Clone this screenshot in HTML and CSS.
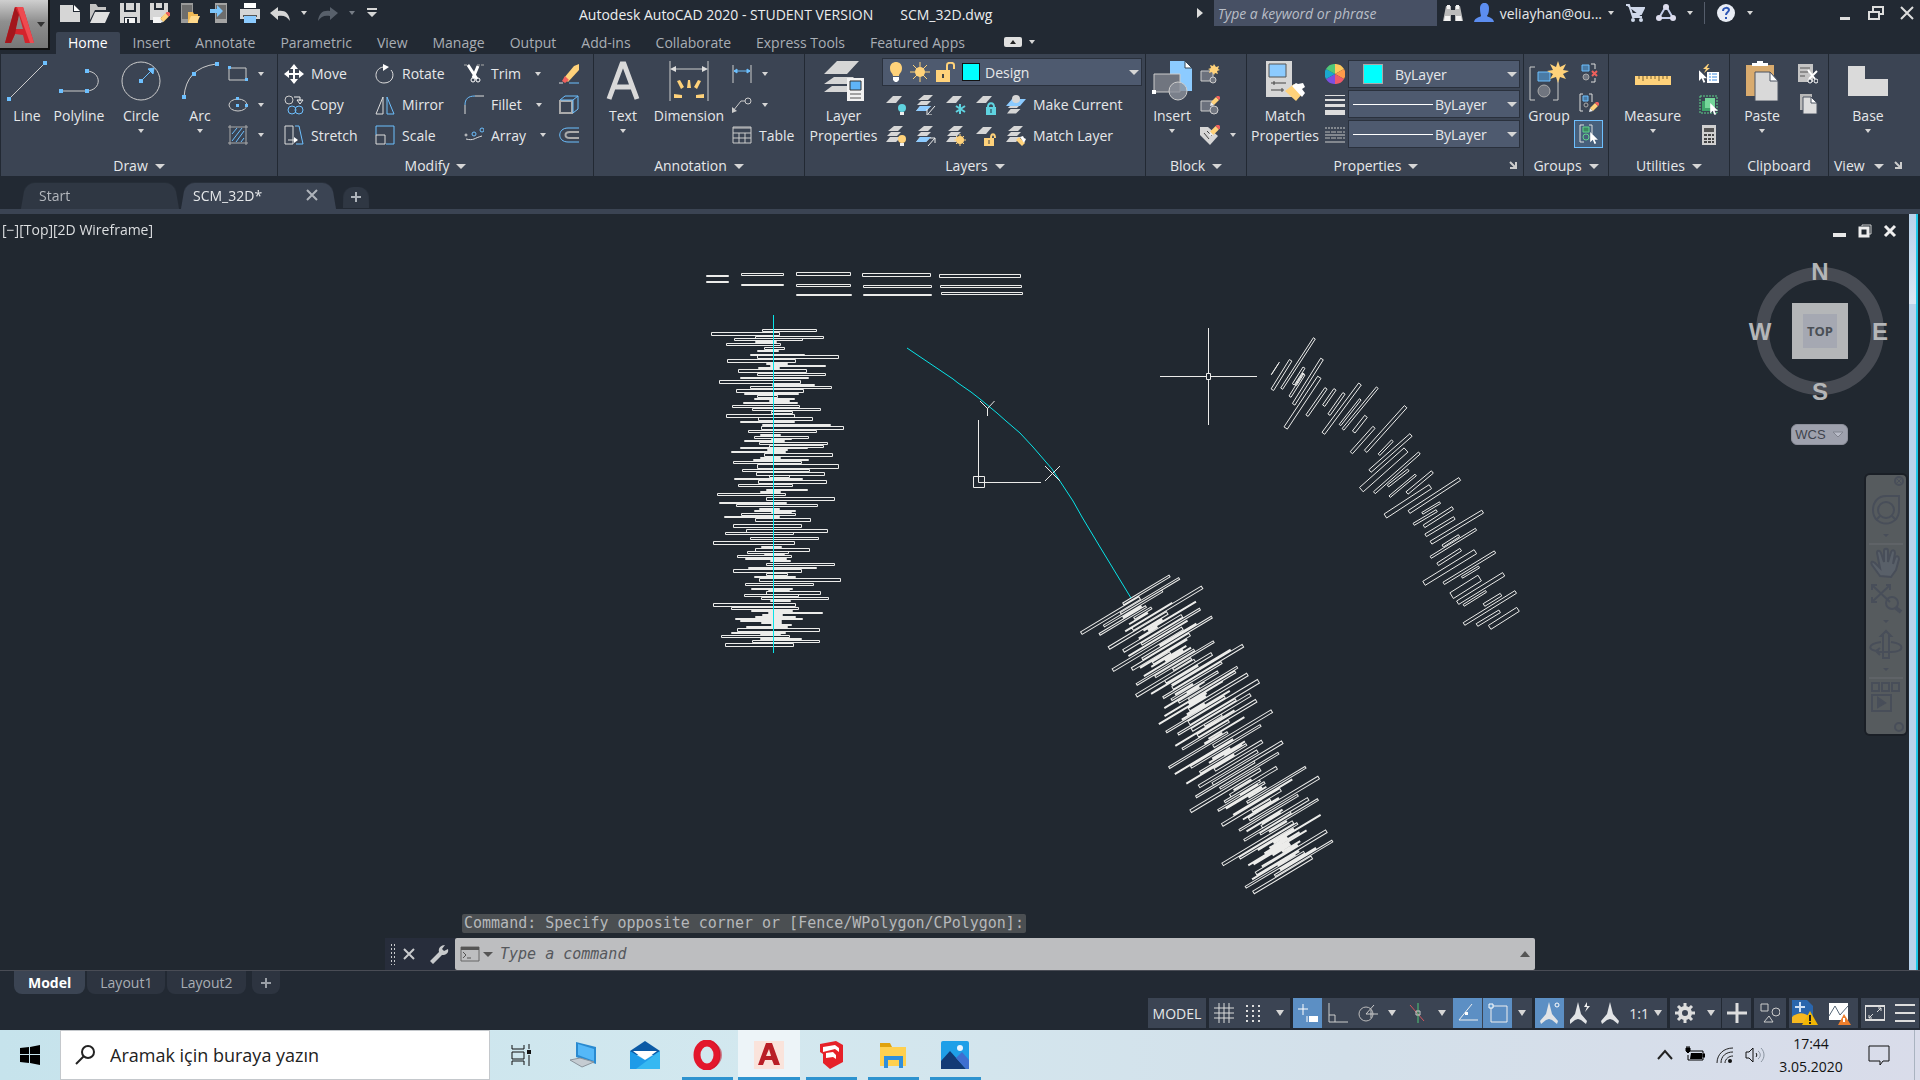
FILE: index.html
```html
<!DOCTYPE html>
<html lang="en">
<head>
  <meta charset="UTF-8">
  <meta name="viewport" content="width=device-width, initial-scale=1.0">
  <title>Autodesk AutoCAD 2020 - SCM_32D.dwg</title>
  <link rel="stylesheet" href="styles.css">
</head>
<body>

<svg class="sprite" aria-hidden="true">
  <symbol id="sheet" viewBox="0 0 20 20"><path d="M7 1h9l-6 7H0z" fill="#d6d6d6"/></symbol>
  <symbol id="stack" viewBox="0 0 20 20"><path d="M8 0h9l-5 5H2zM5 6h10l-4 4H1zM4 11h11l-5 5H0z" fill="#d6d6d6"/></symbol>
  <symbol id="pencil" viewBox="0 0 10 10"><path d="M0 10l1-4 3 3z" fill="#eee"/><path d="M1 6l5-5 3 3-5 5z" fill="#ffd27a"/><path d="M6 1l1-1h2l1 1v2L9 4z" fill="#f0605c"/></symbol>
  <symbol id="cursor" viewBox="0 0 10 14"><path d="M0 0v12l3-3 2 5 2-1-2-4h4z" fill="#fff"/></symbol>
  <symbol id="launch" viewBox="0 0 10 10"><path d="M2 2l6 6M8 2v6H2" fill="none" stroke="#ccc" stroke-width="2"/></symbol>
  <symbol id="person" viewBox="0 0 20 24"><path d="M10 1l2 8 1 4 6 7-1 3-5-4-3-1-3 1-5 4-1-3 6-7 1-4z" fill="#e2e4e6"/></symbol>
</svg>

<div class="app">

  <header class="titlebar">
    <button class="app-logo" aria-label="Application menu">
      <svg width="32" height="40" viewBox="0 0 32 40"><path d="M2 39L12 3h8l11 36h-9l-2-8-8-1-4 9z" fill="#d3242c"/><path d="M12 3l4 8-4 19-4 9H2z" fill="#a3171d"/><path d="M16 11l4 14h-7z" fill="#8a8a8a"/><path d="M20 3l11 36h-4L14 3z" fill="#ee4a50"/></svg>
      <i class="caret dark"></i>
    </button>
    <div class="quick">
      <button aria-label="New"><svg width="20" height="20" viewBox="0 0 20 20"><path d="M0 2h13v7h7v10H0z" fill="#d6d6d6"/><path d="M14 2l6 6h-6z" fill="#fff"/></svg></button>
      <button aria-label="Open"><svg width="20" height="20" viewBox="0 0 20 20"><path d="M0 1h6l2 3h8v3H5L0 17z" fill="#c4c4c4"/><path d="M5 9h15l-5 11H0z" fill="#e0e0e0"/></svg></button>
      <button aria-label="Save"><svg width="20" height="20" viewBox="0 0 20 20"><path d="M0 0h4v9h12V0h4v20h-3v-6H4v6H0zM6 0h8v7H6z" fill="#d6d6d6"/><path d="M5 15h10v5H5z" fill="#f4f4f4"/><path d="M7 16h2v4H7z" fill="#222933"/></svg></button>
      <button aria-label="Save as"><svg width="20" height="20" viewBox="0 0 20 20"><path d="M0 0h4v7h10V0h4v9l-6 5H4v3H0zM6 0h6v5H6z" fill="#d6d6d6"/><path d="M3 14h8v6H3z" fill="#f4f4f4"/><use href="#pencil" x="9" y="9" width="11" height="11"/></svg></button>
      <button aria-label="Open from mobile"><svg width="20" height="20" viewBox="0 0 20 20"><path d="M1 0h12v20H1z" fill="#9a9a9a"/><path d="M2 2h10v14H2z" fill="#6d6d6d"/><path d="M8 9h5l1 2h4v9H8z" fill="#f0b955"/><path d="M11 13h9l-3 7H8z" fill="#ffd98c"/></svg></button>
      <button aria-label="Save to mobile"><svg width="20" height="20" viewBox="0 0 20 20"><path d="M5 0h12v20H5z" fill="#a4a4a4"/><path d="M6 2h10v14H6z" fill="#6d6d6d"/><path d="M0 6h7V2l6 6-6 6v-4H0z" fill="#7cc4fa"/></svg></button>
      <button aria-label="Plot"><svg width="20" height="20" viewBox="0 0 20 20"><path d="M4 0h12v5H4z" fill="#fff"/><path d="M0 6h20v10H0z" fill="#d6d6d6"/><path d="M3 12h14v2H3z" fill="#555"/><path d="M4 13h12v7H4z" fill="#8ccbff"/></svg></button>
      <button aria-label="Undo"><svg width="20" height="20" viewBox="0 0 20 20"><path d="M8 4v4c7-1 11 2 12 10-3-5-7-6-12-5v4L0 10z" fill="#d6d6d6"/></svg></button>
      <i class="caret"></i>
      <button aria-label="Redo"><svg width="20" height="20" viewBox="0 0 20 20"><path d="M12 4v4C5 7 1 10 0 18c3-5 7-6 12-5v4l8-7z" fill="#58606b"/></svg></button>
      <i class="caret dim"></i>
      <button aria-label="Customize"><svg width="12" height="12" viewBox="0 0 12 12"><path d="M1 1h10v2H1zM1 5h10l-5 5z" fill="#d6d6d6"/></svg></button>
    </div>
    <div class="doc-title"><span>Autodesk AutoCAD 2020 - STUDENT VERSION</span><span>SCM_32D.dwg</span></div>
    <div class="info">
      <svg width="6" height="10" viewBox="0 0 6 10"><path d="M0 0l6 5-6 5z" fill="#ddd"/></svg>
      <input type="text" aria-label="Search" placeholder="Type a keyword or phrase">
      <button aria-label="Find"><svg width="20" height="20" viewBox="0 0 20 20"><path d="M3 3h5v4h4V3h5l3 15h-8v-6H8v6H0z" fill="#bbb"/><path d="M2 13h5v5H1zM13 13h5l1 5h-6zM4 2h3v4H4zM13 2h3v4h-3z" fill="#f2f2f2"/></svg></button>
      <button class="user"><svg width="20" height="20" viewBox="0 0 20 20"><path d="M6 5c0-7 9-7 9 0s-2 7-2 8 6 1 7 6H0c1-5 7-5 7-6S6 10 6 5z" fill="#5c8df0"/></svg>veliayhan@ou...<i class="caret"></i></button>
      <button aria-label="App store"><svg width="20" height="20" viewBox="0 0 20 20"><path d="M1 2h3l4 12h9M5 5h14l-3 6H7" fill="#cfd8ea" stroke="#cfd8ea" stroke-width="2"/><circle cx="8" cy="17" r="2" fill="#cfd8ea"/><circle cx="16" cy="17" r="2" fill="#cfd8ea"/></svg></button>
      <button aria-label="Stay connected"><svg width="20" height="20" viewBox="0 0 20 20"><path d="M10 3L3 15h14z" fill="none" stroke="#c3cdea" stroke-width="2"/><circle cx="10" cy="4" r="3" fill="#dde"/><circle cx="3" cy="15" r="3" fill="#dde"/><circle cx="17" cy="15" r="3" fill="#dde"/></svg></button>
      <i class="caret"></i>
      <span class="divider"></span>
      <button aria-label="Help"><svg width="20" height="20" viewBox="0 0 20 20"><circle cx="10" cy="10" r="9" fill="#e9edf5"/><path d="M7 8c0-4 6-4 6-1 0 2-3 2-3 5M10 14v2" fill="none" stroke="#2c55b4" stroke-width="2"/></svg></button>
      <i class="caret"></i>
    </div>
    <div class="win-buttons">
      <button aria-label="Minimize"><svg width="16" height="16" viewBox="0 0 16 16"><path d="M3 12h10v3H3z" fill="#ddd"/></svg></button>
      <button aria-label="Restore"><svg width="16" height="16" viewBox="0 0 16 16"><path d="M1 7h10v7H1zM5 7V2h10v7h-4" fill="none" stroke="#ddd" stroke-width="2"/></svg></button>
      <button aria-label="Close"><svg width="16" height="16" viewBox="0 0 16 16"><path d="M2 2l12 12M14 2L2 14" stroke="#ddd" stroke-width="2"/></svg></button>
    </div>
  </header>

  <nav class="ribbon-tabs">
    <button class="active">Home</button>
    <button>Insert</button>
    <button>Annotate</button>
    <button>Parametric</button>
    <button>View</button>
    <button>Manage</button>
    <button>Output</button>
    <button>Add-ins</button>
    <button>Collaborate</button>
    <button>Express Tools</button>
    <button>Featured Apps</button>
    <button class="ribbon-min" aria-label="Minimize ribbon"><svg width="18" height="10" viewBox="0 0 18 10"><rect width="18" height="10" rx="2" fill="#e0e0e0"/><path d="M6 7l3-4 3 4z" fill="#222"/></svg><i class="caret"></i></button>
  </nav>

  <section class="ribbon">

    <div class="panel">
      <div class="tools draw">
        <button class="big"><svg width="40" height="40" viewBox="0 0 40 40"><path d="M2 38L38 2" stroke="#ccc"/><path d="M0 36h4v4H0zM36 0h4v4h-4z" fill="#6dc0ff"/></svg>Line</button>
        <button class="big"><svg width="40" height="40" viewBox="0 0 40 40"><path d="M2 30h26c15-1 15-19 0-20" fill="none" stroke="#ccc"/><path d="M0 28h4v4H0zM26 28h4v4h-4zM26 8h4v4h-4z" fill="#6dc0ff"/></svg>Polyline</button>
        <button class="big"><svg width="40" height="40" viewBox="0 0 40 40"><circle cx="20" cy="20" r="19" fill="none" stroke="#ccc"/><path d="M20 20L32 8M27 8l6-1-1 6z" stroke="#6dc0ff" fill="#6dc0ff"/><path d="M18 18h4v4h-4z" fill="#6dc0ff"/></svg>Circle<i class="caret"></i></button>
        <button class="big"><svg width="40" height="40" viewBox="0 0 40 40"><path d="M4 36Q6 7 36 3" fill="none" stroke="#ccc"/><path d="M2 34h4v4H2zM12 11h4v4h-4zM35 1h4v4h-4z" fill="#6dc0ff"/></svg>Arc<i class="caret"></i></button>
        <div class="rows">
          <button class="small" aria-label="Rectangle"><svg width="20" height="20" viewBox="0 0 20 20"><path d="M1 4h17v12H1z" fill="none" stroke="#ccc"/><path d="M0 2h3v3H0zM17 14h3v3h-3z" fill="#6dc0ff"/></svg><i class="caret"></i></button>
          <button class="small" aria-label="Ellipse"><svg width="20" height="20" viewBox="0 0 20 20"><ellipse cx="10" cy="10" rx="9" ry="6" fill="none" stroke="#ccc"/><path d="M8 2h3v3H8zM8 9h3v3H8zM17 9h3v3h-3z" fill="#6dc0ff"/></svg><i class="caret"></i></button>
          <button class="small" aria-label="Hatch"><svg width="20" height="20" viewBox="0 0 20 20"><path d="M0 2h20M0 18h20M2 0v20M18 0v20" stroke="#aaa"/><path d="M4 9l5-6M4 16L14 3M8 17l8-11M13 17l3-4" stroke="#6dc0ff"/></svg><i class="caret"></i></button>
        </div>
      </div>
      <button class="panel-title">Draw<i class="caret wide"></i></button>
    </div>

    <div class="panel">
      <div class="tools modify">
        <div class="rows">
          <button class="small"><svg width="20" height="20" viewBox="0 0 20 20"><path d="M10 2v16M2 10h16" stroke="#fff" stroke-width="2"/><path d="M10 0l4 5H6zM10 20l4-5H6zM0 10l5-4v8zM20 10l-5-4v8z" fill="#fff"/></svg>Move</button>
          <button class="small"><svg width="20" height="20" viewBox="0 0 20 20"><circle cx="5" cy="5" r="4" fill="none" stroke="#ccc"/><path d="M10 2h6v4M13 5h6l-3 4z" fill="none" stroke="#eee"/><g fill="none" stroke="#6dc0ff"><circle cx="8" cy="15" r="4"/><circle cx="15" cy="15" r="4"/></g></svg>Copy</button>
          <button class="small"><svg width="20" height="20" viewBox="0 0 20 20"><path d="M1 1h8v18H1zM4 15h8" fill="none" stroke="#ddd"/><path d="M10 12l4 3-4 3z" fill="#fff"/><path d="M11 1h4l4 18h-7" fill="none" stroke="#6dc0ff"/></svg>Stretch</button>
        </div>
        <div class="rows">
          <button class="small"><svg width="20" height="20" viewBox="0 0 20 20"><path d="M8 3C-2 5-1 19 9 19c9 0 11-9 7-13" fill="none" stroke="#ddd" stroke-width="1"/><path d="M8 0l6 3-6 4z" fill="#fff"/></svg>Rotate</button>
          <button class="small"><svg width="20" height="20" viewBox="0 0 20 20"><path d="M8 2v17H1z" fill="none" stroke="#ddd"/><path d="M12 2v17h7z" fill="none" stroke="#6dc0ff"/></svg>Mirror</button>
          <button class="small"><svg width="20" height="20" viewBox="0 0 20 20"><path d="M1 10V1h18v18h-8" fill="none" stroke="#6dc0ff"/><path d="M1 10h9v9H1z" fill="none" stroke="#ddd"/></svg>Scale</button>
        </div>
        <div class="rows">
          <button class="small"><svg width="20" height="20" viewBox="0 0 20 20"><path d="M0 1h5M13 1h7" stroke="#aaa" stroke-dasharray="3 1"/><path d="M4 1l9 14M14 2L9 14" stroke="#fff" stroke-width="3"/><g fill="none" stroke="#fff" stroke-width="1"><circle cx="9" cy="16" r="2"/><circle cx="14" cy="16" r="2"/></g></svg>Trim<i class="caret far"></i></button>
          <button class="small"><svg width="20" height="20" viewBox="0 0 20 20"><path d="M1 10C1 4 4 1 11 1" fill="none" stroke="#6dc0ff"/><path d="M1 10v9M11 1h9" stroke="#ddd"/></svg>Fillet<i class="caret far"></i></button>
          <button class="small"><svg width="20" height="20" viewBox="0 0 20 20"><path d="M2 14c8 2 8-1 16-3" fill="none" stroke="#ddd"/><circle cx="2" cy="10" r="1" fill="none" stroke="#ddd"/><circle cx="10" cy="9" r="2" fill="none" stroke="#6dc0ff"/><circle cx="18" cy="5" r="2" fill="none" stroke="#6dc0ff"/></svg>Array<i class="caret far"></i></button>
        </div>
        <div class="rows">
          <button class="small" aria-label="Erase"><svg width="20" height="20" viewBox="0 0 20 20"><path d="M0 19h4" stroke="#ddd"/><path d="M10 19h10" stroke="#6dc0ff"/><path d="M5 14L15 2l5-2v6L9 18z" fill="#ffd27a"/><path d="M3 17l3-5 4 4-4 3z" fill="#f0605c"/></svg></button>
          <button class="small" aria-label="Explode"><svg width="20" height="20" viewBox="0 0 20 20"><path d="M1 6h12v12H1z" fill="none" stroke="#aaa" stroke-width="2"/><path d="M1 5l5-4h13v13l-5 4M19 1l-5 4v13M2 5h12" fill="none" stroke="#6dc0ff"/></svg></button>
          <button class="small" aria-label="Offset"><svg width="20" height="20" viewBox="0 0 20 20"><path d="M20 3H9c-11 0-11 14 0 14h11" fill="none" stroke="#6dc0ff"/><path d="M20 7h-9c-6 0-6 6 0 6h9" fill="none" stroke="#aaa" stroke-width="2"/></svg></button>
        </div>
      </div>
      <button class="panel-title">Modify<i class="caret wide"></i></button>
    </div>

    <div class="panel">
      <div class="tools annotation">
        <button class="big"><svg width="40" height="40" viewBox="0 0 40 40"><path d="M6 38L19 3h2l13 35M11 26h18" fill="none" stroke="#d9d9d9" stroke-width="5"/></svg>Text<i class="caret"></i></button>
        <button class="big"><svg width="40" height="40" viewBox="0 0 40 40"><path d="M1 0v40M39 0v40M3 8h34" stroke="#ccc"/><path d="M1 8l6-3v6zM39 8l-6-3v6z" fill="#ddd"/><path d="M18 27l1-8h2l1 8zM12 28l-4-8 3-1 4 7zM28 28l4-8-3-1-4 7zM5 33l8 1v3H5zM35 33l-8 1v3h8z" fill="#ffd27a"/></svg>Dimension</button>
        <div class="rows">
          <button class="small" aria-label="Linear"><svg width="20" height="20" viewBox="0 0 20 20"><path d="M1 1v18M19 1v18" stroke="#ccc"/><path d="M2 7h16M5 5L2 7l3 2zM15 5l3 2-3 2z" stroke="#6dc0ff" fill="#6dc0ff"/></svg><i class="caret"></i></button>
          <button class="small" aria-label="Leader"><svg width="20" height="20" viewBox="0 0 20 20"><path d="M1 16L9 6h4" stroke="#ccc" fill="none"/><circle cx="16" cy="6" r="3" stroke="#ccc" fill="none"/><path d="M0 18v-6l5 4z" fill="#ccc"/></svg><i class="caret"></i></button>
          <button class="small"><svg width="20" height="20" viewBox="0 0 20 20"><path d="M1 2h18v16H1z" fill="none" stroke="#ccc"/><path d="M1 3h18M1 8h18M1 13h18M7 8v10M13 8v10" stroke="#ccc"/></svg>Table</button>
        </div>
      </div>
      <button class="panel-title">Annotation<i class="caret wide"></i></button>
    </div>

    <div class="panel">
      <div class="tools layers">
        <button class="big"><svg width="40" height="40" viewBox="0 0 40 40"><path d="M13 0h22L23 13H0zM10 16h20l-7 7H0zM8 25h16v6H0z" fill="#d6d6d6"/><path d="M23 17h17v23H23z" fill="#f2f2f2"/><path d="M26 20h11v9H26z" fill="#5fb4f8" stroke="#333"/><path d="M26 33h11M26 37h11" stroke="#555"/></svg>Layer<br>Properties</button>
        <div class="layer-rows">
          <div class="combo layer-combo">
            <span class="layer-state">
              <svg width="16" height="22" viewBox="0 0 16 22"><path d="M2 7c0-8 12-8 12 0 0 5-3 5-3 8H5c0-3-3-3-3-8z" fill="#ffd27a"/><path d="M5 16h6v3l-2 2H7l-2-2z" fill="#fff"/></svg>
              <svg width="20" height="20" viewBox="0 0 20 20"><circle cx="10" cy="10" r="5" fill="#ffd27a"/><path d="M10 0v20M0 10h20M3 3l14 14M17 3L3 17" stroke="#ffd27a"/></svg>
              <svg width="20" height="20" viewBox="0 0 20 20"><path d="M0 8h14v12H0z" fill="#ffd27a"/><path d="M11 9V3c0-3 7-3 7 0v4" fill="none" stroke="#ffd27a" stroke-width="2"/><path d="M7 12v4" stroke="#444" stroke-width="2"/></svg>
              <i class="swatch"></i>
            </span>
            <select aria-label="Layer"><option>Design</option></select>
            <i class="caret wide"></i>
          </div>
          <div class="icon-row">
            <button class="small" aria-label="Layer off"><svg width="20" height="20" viewBox="0 0 20 20"><use href="#sheet" width="20" height="20"/><circle cx="16" cy="13" r="4" fill="#5fd3e0"/><path d="M14 17h4v3h-4z" fill="#eee"/></svg></button>
            <button class="small" aria-label="Layer isolate"><svg width="20" height="20" viewBox="0 0 20 20"><use href="#stack" width="20" height="20"/><path d="M4 11h11l-5 5H0z" fill="#8ccbff"/><path d="M19 11l-7 8M11 14v6h5" stroke="#eee" fill="none"/></svg></button>
            <button class="small" aria-label="Layer freeze"><svg width="20" height="20" viewBox="0 0 20 20"><use href="#sheet" width="20" height="20"/><path d="M14 9v10M10 11l9 6M19 11l-9 6" stroke="#5fd3e0" stroke-width="2"/></svg></button>
            <button class="small" aria-label="Layer lock"><svg width="20" height="20" viewBox="0 0 20 20"><use href="#sheet" width="20" height="20"/><path d="M10 12h10v8H10z" fill="#5fd3e0"/><path d="M12 12c0-5 6-5 6 0" fill="none" stroke="#5fd3e0" stroke-width="2"/><path d="M15 14v4" stroke="#234"/></svg></button>
            <button class="small"><svg width="20" height="20" viewBox="0 0 20 20"><use href="#stack" y="4" width="20" height="18"/><path d="M6 4h14l-6 7H0z" fill="#8ccbff"/><circle cx="10" cy="4" r="4" fill="#d6d6d6"/></svg>Make Current</button>
          </div>
          <div class="icon-row">
            <button class="small" aria-label="Turn all layers on"><svg width="20" height="20" viewBox="0 0 20 20"><use href="#stack" width="20" height="20"/><circle cx="16" cy="13" r="4" fill="#ffd27a"/><path d="M14 17h4v3h-4z" fill="#eee"/></svg></button>
            <button class="small" aria-label="Layer unisolate"><svg width="20" height="20" viewBox="0 0 20 20"><use href="#stack" width="20" height="20"/><path d="M4 11h11l-5 5H0z" fill="#8ccbff"/><path d="M12 20l7-8M14 12h5v5" stroke="#eee" fill="none"/></svg></button>
            <button class="small" aria-label="Thaw all layers"><svg width="20" height="20" viewBox="0 0 20 20"><use href="#stack" width="20" height="20"/><circle cx="14" cy="14" r="4" fill="#ffd27a"/><path d="M14 8v12M8 14h12M10 10l8 8M18 10l-8 8" stroke="#ffd27a"/></svg></button>
            <button class="small" aria-label="Layer unlock"><svg width="20" height="20" viewBox="0 0 20 20"><use href="#sheet" width="20" height="20"/><path d="M8 12h10v8H8z" fill="#ffd27a"/><path d="M15 12c0-5 4-5 4 0" fill="none" stroke="#ffd27a" stroke-width="2"/><path d="M13 14v4" stroke="#444"/></svg></button>
            <button class="small"><svg width="20" height="20" viewBox="0 0 20 20"><use href="#stack" width="20" height="20"/><path d="M10 14l3-3 6 6-3 3z" fill="#ffd27a"/><path d="M14 11l3-1 1 2 2 1-2 4z" fill="#fff"/></svg>Match Layer</button>
          </div>
        </div>
      </div>
      <button class="panel-title">Layers<i class="caret wide"></i></button>
    </div>

    <div class="panel">
      <div class="tools block">
        <button class="big"><svg width="40" height="40" viewBox="0 0 40 40"><path d="M18 0h15l7 7v23H18z" fill="#8ccbff"/><path d="M33 0v7h7z" fill="#fff" stroke="#345"/><path d="M2 13h26v18H2z" fill="#70757f" stroke="#ccc"/><path d="M0 29h4v4H0z" fill="#fff"/><circle cx="26" cy="30" r="9" fill="#8b909a" fill-opacity=".8" stroke="#ccc"/></svg>Insert<i class="caret"></i></button>
        <div class="rows">
          <button class="small" aria-label="Create block"><svg width="20" height="20" viewBox="0 0 20 20"><path d="M1 7h12v10H1z" fill="#6b717d" stroke="#ccc"/><circle cx="13" cy="16" r="3" fill="#70757f" stroke="#ccc"/><path d="M14 0l2 3 3-1-1 3 2 1-3 1 1 3-3-1-1 2-2-3-3 1 1-3-2-1 3-1-1-3 3 1z" fill="#ffd27a"/></svg></button>
          <button class="small" aria-label="Edit block"><svg width="20" height="20" viewBox="0 0 20 20"><path d="M1 6h12v10H1z" fill="#6b717d" stroke="#ccc"/><circle cx="14" cy="15" r="4" fill="#70757f" stroke="#ccc"/><use href="#pencil" x="10" y="1" width="10" height="10"/></svg></button>
          <button class="small" aria-label="Edit attributes"><svg width="20" height="20" viewBox="0 0 20 20"><path d="M0 2h8l10 9-8 9L0 10z" fill="#d6d6d6"/><path d="M4 8l5 6M7 6l5 5" stroke="#444"/><use href="#pencil" x="9" y="0" width="11" height="11"/></svg><i class="caret"></i></button>
        </div>
      </div>
      <button class="panel-title">Block<i class="caret wide"></i></button>
    </div>

    <div class="panel">
      <div class="tools properties">
        <button class="big"><svg width="40" height="40" viewBox="0 0 40 40"><path d="M1 0h26v36H1z" fill="#d6d6d6"/><path d="M4 3h17v13H4z" fill="#8ccbff" stroke="#555"/><path d="M6 22h15M6 29h13M9 20v4M17 27v4" stroke="#444"/><path d="M20 30l9-7 8 10-6 7z" fill="#ffd27a"/><path d="M27 25l4-3 2 1 5-1 2 4-3 2 3 4-3 4z" fill="#fff"/></svg>Match<br>Properties</button>
        <div class="rows">
          <span class="small"><svg width="20" height="20" viewBox="0 0 20 20"><path d="M10 10V0a10 10 0 0 1 9 5z" fill="#ffc85c"/><path d="M10 10l9-5a10 10 0 0 1 0 10z" fill="#ff9a4a"/><path d="M10 10l9 5a10 10 0 0 1-9 5z" fill="#ef5a6a"/><path d="M10 10v10a10 10 0 0 1-9-5z" fill="#7d4fe0"/><path d="M10 10l-9 5A10 10 0 0 1 1 5z" fill="#1ba8d0"/><path d="M10 10L1 5a10 10 0 0 1 9-5z" fill="#50c878"/></svg></span>
          <span class="small"><svg width="20" height="20" viewBox="0 0 20 20"><path d="M0 0h20v1H0zM0 4h20v2H0zM0 9h20v3H0zM0 15h20v5H0z" fill="#ddd"/></svg></span>
          <span class="small"><svg width="20" height="20" viewBox="0 0 20 20"><path d="M0 3h20" stroke="#ccc" stroke-dasharray="2 1"/><path d="M0 7h20M0 13h20" stroke="#bbb" stroke-dasharray="5 1"/><path d="M0 10h20M0 17h20" stroke="#ccc"/></svg></span>
        </div>
        <div class="combos">
          <div class="combo color-combo"><i class="swatch"></i><select aria-label="Object color"><option>ByLayer</option></select><i class="caret wide"></i></div>
          <div class="combo line-combo"><i class="line"></i><select aria-label="Lineweight"><option>ByLayer</option></select><i class="caret wide"></i></div>
          <div class="combo line-combo"><i class="line"></i><select aria-label="Linetype"><option>ByLayer</option></select><i class="caret wide"></i></div>
        </div>
      </div>
      <button class="panel-title props-title">Properties<i class="caret wide"></i></button>
      <button class="launcher" aria-label="Properties palette"><svg width="10" height="10"><use href="#launch"/></svg></button>
    </div>

    <div class="panel">
      <div class="tools groups">
        <button class="big"><svg width="40" height="40" viewBox="0 0 40 40"><path d="M6 6H1v33h5M24 39h5V20" fill="none" stroke="#ccc"/><path d="M9 11h12v9H9z" fill="#4a7ba5" stroke="#6dc0ff"/><circle cx="15" cy="30" r="6" fill="#70757f" stroke="#aaa"/><path d="M29 0l2 6 6-3-3 6 6 1-6 3 3 5-6-2-2 6-2-6-6 2 3-5-6-3 6-1-3-6 6 3z" fill="#ffd27a"/></svg>Group</button>
        <div class="rows">
          <button class="small" aria-label="Ungroup"><svg width="20" height="20" viewBox="0 0 20 20"><path d="M3 2h7v6H3z" fill="#4a7ba5" stroke="#6dc0ff"/><circle cx="7" cy="14" r="3" fill="#70757f" stroke="#aaa"/><path d="M12 1h4v5M12 19h4v-4" fill="none" stroke="#ddd"/><path d="M13 8l5 5M18 8l-5 5" stroke="#f0605c" stroke-width="2"/></svg></button>
          <button class="small" aria-label="Edit group"><svg width="20" height="20" viewBox="0 0 20 20"><path d="M4 1H1v17h3M10 1h3v8" fill="none" stroke="#ddd"/><path d="M4 3h5v5H4z" fill="#4a7ba5" stroke="#6dc0ff"/><circle cx="7" cy="12" r="2" fill="none" stroke="#aaa"/><use href="#pencil" x="10" y="9" width="10" height="10"/></svg></button>
          <button class="small on" aria-label="Group selection"><svg width="20" height="20" viewBox="0 0 20 20"><path d="M5 1H1v17h4M10 1h3v9" fill="none" stroke="#ddd"/><path d="M4 3h6v5H4z" fill="#3c8a61" stroke="#5fd38a"/><circle cx="7" cy="13" r="3" fill="none" stroke="#5fd38a"/><use href="#cursor" x="11" y="8" width="9" height="12"/></svg></button>
        </div>
      </div>
      <button class="panel-title">Groups<i class="caret wide"></i></button>
    </div>

    <div class="panel">
      <div class="tools utilities">
        <button class="big"><svg width="40" height="40" viewBox="0 0 40 40"><path d="M2 15h36v9H2z" fill="#ffd27a"/><path d="M6 15v3M10 15v5M14 15v3M18 15v3M22 15v3M26 15v5M30 15v3M34 15v3" stroke="#7a6230"/></svg>Measure<i class="caret"></i></button>
        <div class="rows">
          <button class="small" aria-label="Quick select"><svg width="20" height="20" viewBox="0 0 20 20"><path d="M9 0L4 5h3l-2 4 6-5H8l2-4z" fill="#ffd27a"/><use href="#cursor" y="6" width="9" height="13"/><path d="M8 8h12v11H8z" fill="#fff"/><path d="M10 10h2M10 13h2M10 16h2M13 10h5M13 13h5M13 16h5" stroke="#3a8ae0"/></svg></button>
          <button class="small" aria-label="Select all"><svg width="20" height="20" viewBox="0 0 20 20"><path d="M1 1h17v17H1z" fill="none" stroke="#5fd38a" stroke-dasharray="2 1"/><path d="M3 6h11v10H3z" fill="#3fa36a"/><path d="M6 3h10v10H6z" fill="#74d69a"/><use href="#cursor" x="11" y="8" width="9" height="12"/></svg></button>
          <button class="small" aria-label="Quick calculator"><svg width="20" height="20" viewBox="0 0 20 20"><path d="M3 0h14v20H3z" fill="#d0d0d0"/><path d="M5 3h10v4H5z" fill="#555"/><path d="M5 9h3v2H5zM9 9h3v2H9zM13 9h2v2h-2zM5 13h3v2H5zM9 13h3v2H9zM13 13h2v2h-2zM5 16h3v2H5zM9 16h3v2H9zM13 16h2v2h-2z" fill="#444"/></svg></button>
        </div>
      </div>
      <button class="panel-title">Utilities<i class="caret wide"></i></button>
    </div>

    <div class="panel">
      <div class="tools clipboard">
        <button class="big"><svg width="40" height="40" viewBox="0 0 40 40"><path d="M4 4h28v31H4z" fill="#d9ab6e"/><path d="M10 5V2h5V0h6v2h5v3z" fill="#fff"/><path d="M13 11h15l8 9v20H13z" fill="#d9d9d9" stroke="#4a5260"/><path d="M28 11v9h8z" fill="#fff" stroke="#4a5260"/></svg>Paste<i class="caret"></i></button>
        <div class="rows">
          <button class="small" aria-label="Cut"><svg width="20" height="20" viewBox="0 0 20 20"><path d="M0 0h15v18H0z" fill="#c4c4c4"/><path d="M2 4h10M2 8h8M2 12h5" stroke="#555"/><path d="M10 6l7 9M19 7l-8 8" stroke="#fff" stroke-width="2"/><g stroke="#fff" fill="#3b4453"><circle cx="12" cy="17" r="2"/><circle cx="18" cy="17" r="2"/></g></svg></button>
          <button class="small" aria-label="Copy clip"><svg width="20" height="20" viewBox="0 0 20 20"><path d="M2 0h12v16H2z" fill="#b8b8b8"/><path d="M5 3h8l6 6v11H5z" fill="#dedede" stroke="#4a5260"/><path d="M13 3v6h6z" fill="#fff" stroke="#4a5260"/></svg></button>
        </div>
      </div>
      <div class="panel-title">Clipboard</div>
    </div>

    <div class="panel">
      <div class="tools view">
        <button class="big"><svg width="40" height="40" viewBox="0 0 40 40"><path d="M0 5h17v13h23v17H0z" fill="#dadada"/></svg>Base<i class="caret"></i></button>
      </div>
      <button class="panel-title view-title">View<i class="caret wide"></i></button>
      <button class="launcher view-launcher" aria-label="View dialog"><svg width="10" height="10"><use href="#launch"/></svg></button>
    </div>
  </section>

  <div class="file-tabs">
    <button class="tab">Start</button>
    <button class="tab active">SCM_32D*<svg width="12" height="12" viewBox="0 0 12 12"><path d="M1 1l10 10M11 1L1 11" stroke="#aeb3ba" stroke-width="2"/></svg></button>
    <button class="tab add" aria-label="New drawing"><svg width="12" height="12" viewBox="0 0 12 12"><path d="M6 1v10M1 6h10" stroke="#aeb3ba" stroke-width="2"/></svg></button>
  </div>

  <main class="canvas">
    <svg class="model-space" aria-hidden="true">
      <g transform="translate(0 -214)" fill="none">
        <g id="core" class="ink"></g>
        <use href="#core" transform="translate(1132 598) rotate(-31) translate(-773 -330)"/>
        <g id="legend" class="ink"></g>
        <g id="fan" class="ink"></g>
        <path class="axis" d="M773.5 315V653"/>
        <path class="axis" d="M907 348L953 379L958 383L971 392L980 399L997 413L1006 421L1020 433L1033 447L1052 469L1073 501L1082 517L1100 547L1131 598"/>
        <path class="ink" d="M978.5 420v62.500h62.500M973.500 476.500h11v11h-11zM980 401l7.500 7.500 7-7.500M987.500 408v8M1045 466l15 15M1060 466l-15 15"/>
        <path class="ink" d="M1160 376.500h46M1211 376.500h46M1208.500 328v45M1208.500 380v45M1206.500 373.500h4v6h-4z"/>
      </g>
    </svg>

    <div class="view-label">[−][Top][2D Wireframe]</div>

    <div class="doc-buttons">
      <button aria-label="Minimize drawing"><svg width="14" height="14" viewBox="0 0 14 14"><path d="M0 9h13v4H0z" fill="#e8e8e8"/></svg></button>
      <button aria-label="Restore drawing"><svg width="14" height="14" viewBox="0 0 14 14"><path d="M4 2V1h9v9h-2" fill="none" stroke="#ccc" stroke-width="1"/><path d="M2 4h8v8H2z" fill="none" stroke="#eee" stroke-width="3"/></svg></button>
      <button aria-label="Close drawing"><svg width="14" height="14" viewBox="0 0 14 14"><path d="M2 2l10 10M12 2L2 12" stroke="#eee" stroke-width="3"/></svg></button>
    </div>

    <div class="viewcube">
      <span class="n">N</span><span class="w">W</span><span class="e">E</span><span class="s">S</span>
      <button class="face"><span>TOP</span></button>
    </div>
    <button class="wcs">WCS<svg width="12" height="8" viewBox="0 0 12 8"><path d="M1 1h10L6 6z" fill="#b9bcc8" stroke="#81848f"/></svg></button>

    <div class="navbar">
      <svg width="40" height="259" viewBox="0 0 40 259" fill="none" stroke="#484e59" stroke-width="2">
        <circle cx="33" cy="6" r="4"/><path d="M31 4l4 4M35 4l-4 4" stroke-width="1"/>
        <path d="M20 21h13v14c0 18-26 18-26 0 0-8 5-14 13-14z"/><circle cx="20" cy="35" r="8"/><path d="M14 41l-4 4M26 41l4 4"/>
        <path d="M17 59h6l-3 3zM17 145h6l-3 3zM17 193h6l-3 3z" fill="#484e59" stroke="none"/>
        <path d="M3 69h34M3 203h34" stroke="#686d70" stroke-width="1"/>
        <path d="M14 101L6 90c-2-4 1-4 3-2l5 5-3-15c0-3 3-3 4 0l3 9V76c0-3 4-3 4 0v11l3-10c1-3 4-2 4 1l-2 11 2-6c1-3 4-2 4 1l-3 11-5 7z" fill="#596069"/>
        <path d="M7 111l17 16M23 111L7 126M6 115v-5h5M20 110h4v5M6 122v5h5" /><circle cx="26" cy="128" r="6"/><path d="M30 133l5 4" stroke-width="4"/>
        <path d="M17 183v-22h-2l5-5 5 5h-2v22zM15 167c-14 2-14 9-2 9M25 167c14 2 14 9 0 10h-13M14 173l-4 3 4 4"/>
        <path d="M6 208h7v8H6zM16 208h7v8h-7zM26 208h7v8h-7zM6 220h19v16H6z"/><path d="M12 223v9l7-4z" fill="#484e59"/>
        <circle cx="33" cy="252" r="4"/>
      </svg>
    </div>

    <div class="command-area">
      <div class="history"><span>Command: Specify opposite corner or [Fence/WPolygon/CPolygon]:</span></div>
      <div class="command">
        <div class="command-tools">
          <span class="grip"></span>
          <button aria-label="Close command line"><svg width="12" height="12" viewBox="0 0 12 12"><path d="M1 1l10 10M11 1L1 11" stroke="#c8cacc" stroke-width="2"/></svg></button>
          <button class="wrench" aria-label="Customize command line"><svg width="20" height="20" viewBox="0 0 20 20"><path d="M1 17L10 8c-1-4 2-7 6-7l-3 4 2 2 4-2c1 4-2 6-6 6l-9 9z" fill="#c8cacc"/></svg></button>
        </div>
        <div class="command-box">
          <svg width="20" height="16" viewBox="0 0 20 16"><path d="M1 1h18v14H1z" fill="none" stroke="#666"/><path d="M1 1h18v3H1z" fill="#555"/><path d="M3 6l3 3-3 3M7 12h4" fill="none" stroke="#555"/></svg>
          <i class="caret wide grey"></i>
          <input type="text" aria-label="Command" placeholder="Type a command">
          <svg width="10" height="6" viewBox="0 0 10 6"><path d="M5 0l5 6H0z" fill="#555"/></svg>
        </div>
      </div>
    </div>
    <div class="scroll-edge"></div>
  </main>

  <footer class="bottom">
    <div class="layout-tabs">
      <button class="active">Model</button>
      <button>Layout1</button>
      <button>Layout2</button>
      <button class="add" aria-label="New layout"><svg width="12" height="12" viewBox="0 0 12 12"><path d="M6 1v10M1 6h10" stroke="#9a9fa6" stroke-width="2"/></svg></button>
    </div>
    <div class="status">
      <div class="cell"><button class="model-btn">MODEL</button></div>
      <div class="cell">
        <button aria-label="Grid"><svg width="20" height="20" viewBox="0 0 20 20"><path d="M5 0v20M10 0v20M15 0v20M0 5h20M0 10h20M0 15h20" stroke="#ddd"/></svg></button>
        <button aria-label="Snap"><svg width="20" height="20" viewBox="0 0 20 20"><path d="M2 3h16M2 8h16M2 13h16M2 18h16" stroke="#ddd" stroke-width="2" stroke-dasharray="2 4"/></svg></button>
        <i class="caret tall"></i>
      </div>
      <div class="cell wide-cell">
        <button class="on" aria-label="Dynamic input"><svg width="20" height="20" viewBox="0 0 20 20"><path d="M5 1v11M0 6h10M9 13v6" stroke="#fff"/><path d="M11 13h9v6h-9z" fill="#fff"/></svg></button>
        <button aria-label="Ortho"><svg width="20" height="20" viewBox="0 0 20 20"><path d="M1 0v19h19M1 12h6v7" fill="none" stroke="#ccc"/></svg></button>
        <button aria-label="Polar tracking"><svg width="20" height="20" viewBox="0 0 20 20"><circle cx="8" cy="11" r="7" fill="none" stroke="#bbb"/><path d="M8 11h12M8 11l8-9M13 7v8" stroke="#ccc"/></svg></button>
        <i class="caret tall"></i>
        <button aria-label="Isometric"><svg width="20" height="20" viewBox="0 0 20 20"><path d="M2 2l14 16" stroke="#d4565c"/><path d="M10 0v20" stroke="#50c878"/><path d="M8 8h4v4H8z" fill="none" stroke="#ccc"/></svg></button>
        <i class="caret tall"></i>
        <button class="on" aria-label="Object snap tracking"><svg width="20" height="20" viewBox="0 0 20 20"><path d="M14 1L1 17h19" fill="none" stroke="#eee"/><path d="M7 9h3v3H7z" fill="#fff"/></svg></button>
        <button class="on" aria-label="Object snap"><svg width="20" height="20" viewBox="0 0 20 20"><path d="M5 3h14v16H3V5" fill="none" stroke="#eee"/><path d="M1 1h4v4H1z" fill="#619bd0" stroke="#fff"/></svg></button>
        <i class="caret tall"></i>
      </div>
      <div class="cell">
        <button class="on" aria-label="Annotation visibility"><svg width="20" height="24"><use href="#person" x="-1" width="20" height="24"/><circle cx="17" cy="4" r="2" fill="none" stroke="#fff"/></svg></button>
        <button aria-label="Auto scale"><svg width="20" height="24"><use href="#person" x="-2" width="20" height="24"/><path d="M17 1l-3 5h3l-2 5 5-6h-3z" fill="#eee"/></svg></button>
        <button aria-label="Annotation scale"><svg width="20" height="24"><use href="#person" width="20" height="24"/></svg></button>
        <button class="scale">1:1<i class="caret tall"></i></button>
      </div>
      <div class="cell">
        <button aria-label="Workspace"><svg width="20" height="20" viewBox="0 0 20 20"><circle cx="10" cy="10" r="5" fill="none" stroke="#ddd" stroke-width="4"/><path d="M10 0v4M10 16v4M0 10h4M16 10h4M3 3l3 3M14 14l3 3M17 3l-3 3M6 14l-3 3" stroke="#ddd" stroke-width="3"/></svg></button>
        <i class="caret tall"></i>
      </div>
      <div class="cell joined"><button aria-label="Annotation monitor"><svg width="20" height="20" viewBox="0 0 20 20"><path d="M10 0v20M0 10h20" stroke="#ddd" stroke-width="3"/></svg></button></div>
      <div class="cell isolate"><button aria-label="Isolate objects"><svg width="20" height="20" viewBox="0 0 20 20"><path d="M1 1h7v7H1zM9 13l4 6H4z" fill="none" stroke="#ccc"/><circle cx="16" cy="9" r="4" fill="none" stroke="#ccc"/></svg></button></div>
      <div class="cell">
        <button aria-label="Drawing warning"><svg width="26" height="26" viewBox="0 0 26 26"><path d="M0 0h15l6 6v17H0z" fill="#2a66ad"/><path d="M0 17c6-5 12-5 18 0v6H0z" fill="#f5b820"/><path d="M8 2v10M3 7h10" stroke="#cfe0f5" stroke-width="2"/><path d="M18 11l8 14H10z" fill="#f2b705"/><path d="M18 15v6M18 22v2" stroke="#222" stroke-width="2"/></svg></button>
        <button aria-label="Graphics performance"><svg width="24" height="24" viewBox="0 0 24 24"><path d="M1 2h19v17H1z" fill="#fff"/><path d="M1 15L7 5l5 9 8-9" fill="none" stroke="#567" stroke-width="1"/><path d="M16 13l7 11H10z" fill="#ef7f2d"/><path d="M16 17v4" stroke="#fff" stroke-width="2"/></svg></button>
      </div>
      <div class="cell">
        <button aria-label="Clean screen"><svg width="20" height="20" viewBox="0 0 20 20"><path d="M0 3h20v14H0z" fill="none" stroke="#ddd" stroke-width="2"/><path d="M12 9l4-4M13 5h3v3M8 11l-4 4M4 12v3h3" stroke="#ddd" fill="none"/></svg></button>
        <button aria-label="Customization"><svg width="20" height="20" viewBox="0 0 20 20"><path d="M0 2h20M0 10h20M0 18h20" stroke="#ddd" stroke-width="2"/></svg></button>
      </div>
    </div>
  </footer>

  <div class="taskbar">
    <button class="start" aria-label="Start"><svg width="20" height="20" viewBox="0 0 20 20"><path d="M0 3l9-1v7H0zM10 2l10-2v9H10zM0 10h9v8l-9-1zM10 10h10v10l-10-2z" fill="#000"/></svg></button>
    <label class="task-search">
      <svg width="22" height="22" viewBox="0 0 22 22"><circle cx="14" cy="8" r="6" fill="none" stroke="#222" stroke-width="2"/><path d="M10 12l-8 8" stroke="#222" stroke-width="2"/></svg>
      <input type="text" aria-label="Ara" placeholder="Aramak için buraya yazın">
    </label>
    <div class="task-apps">
      <button aria-label="Task view"><svg width="22" height="22" viewBox="0 0 22 22"><path d="M2 1v4h12V1M2 8h12v7H2zM2 21v-4h12v4M19 0v5M19 11v11" fill="none" stroke="#111" stroke-width="1"/><path d="M17 6h4v4h-4z" fill="#111"/></svg></button>
      <button aria-label="Computer"><svg width="30" height="30" viewBox="0 0 30 30"><path d="M8 2l20 5v17L8 17z" fill="#2a8ad0"/><path d="M10 4l16 5v12L10 15z" fill="#55b8f8"/><path d="M2 20l10-2 14 4-12 5z" fill="#c5ccd2" stroke="#8a949c"/></svg></button>
      <button aria-label="Mail"><svg width="30" height="30" viewBox="0 0 30 30"><path d="M0 11L15 1l15 10v4H0z" fill="#0b5aa5"/><path d="M3 11h24l-12 9z" fill="#fff"/><path d="M0 11l15 9 15-9v18H0z" fill="#1e9be8"/><path d="M30 11v18H6z" fill="#36b8f2"/></svg></button>
      <button class="open" aria-label="Opera"><svg width="30" height="30" viewBox="0 0 30 30"><ellipse cx="15" cy="15" rx="10" ry="12" fill="none" stroke="#e3172c" stroke-width="7"/><path d="M15 1a15 14 0 0 1 0 28 9 10 0 0 0 0-28z" fill="#bb1024" fill-opacity=".5"/></svg></button>
      <button class="open current" aria-label="AutoCAD"><svg width="30" height="30" viewBox="0 0 30 30"><path d="M0 1h30v28H0z" fill="#fae3db"/><path d="M4 25L12 3h6l8 22h-6l-2-5h-7l-2 5zm8-9h5l-2-7z" fill="#b91f26"/></svg></button>
      <button class="open" aria-label="SketchUp"><svg width="30" height="30" viewBox="0 0 30 30"><path d="M4 4l16-3 7 4v17L14 29l-7-6V14l-3-2z" fill="#e62129"/><path d="M7 7l12-2 4 3v4l-4-3-12 3zM10 13l7-1 3 3v4l-3-2-7 1z" fill="#fff"/></svg></button>
      <button class="open" aria-label="File Explorer"><svg width="30" height="30" viewBox="0 0 30 30"><path d="M2 3h10l2 4v6H2z" fill="#e0a20c"/><path d="M2 7h26v19H2z" fill="#ffd04f"/><path d="M6 16h19v12h-4v-8H10v8H6z" fill="#2f8fdc"/></svg></button>
      <button class="open" aria-label="Photos"><svg width="30" height="30" viewBox="0 0 30 30"><rect x="1" y="1" width="28" height="28" rx="2" fill="#1f9fe8"/><path d="M1 21l9-10 16 18H1z" fill="#123a75"/><path d="M16 18l6-6 7 8v9h-3z" fill="#3f6fd0"/><circle cx="20" cy="8" r="3" fill="#e8f4ff"/></svg></button>
    </div>
    <div class="tray">
      <button aria-label="Hidden icons"><svg width="18" height="18" viewBox="0 0 18 18"><path d="M2 13l7-8 7 8" fill="none" stroke="#222" stroke-width="2"/></svg></button>
      <button aria-label="Battery"><svg width="20" height="18" viewBox="0 0 20 18"><path d="M5 5h13v9H3V9" fill="none" stroke="#000"/><path d="M6 7h11v6H5z" fill="#000"/><path d="M1 2h4v3L3 7 1 5zM18 8h2v3h-2zM2 0v2M4 0v2" stroke="#000"/></svg></button>
      <button aria-label="Network"><svg width="18" height="18" viewBox="0 0 18 18"><path d="M1 17C1 8 8 2 17 2M5 17C5 10 10 6 17 6M9 17c0-4 4-7 8-7" fill="none" stroke="#222"/><circle cx="14" cy="15" r="2" fill="#111"/></svg></button>
      <button aria-label="Volume"><svg width="20" height="18" viewBox="0 0 20 18"><path d="M1 6h3l4-4v14l-4-4H1z" fill="none" stroke="#111"/><path d="M11 7c1 1 1 3 0 4" fill="none" stroke="#111"/><path d="M13 5c3 2 3 6 0 8M16 2c4 4 4 10 0 14" fill="none" stroke="#8a94a0"/></svg></button>
      <button class="clock"><span>17:44</span><span>3.05.2020</span></button>
      <button aria-label="Notifications"><svg width="22" height="22" viewBox="0 0 22 22"><path d="M1 2h20v15h-6l-3 4v-4H1z" fill="none" stroke="#111" stroke-width="1"/></svg></button>
      <span class="desktop-edge"></span>
    </div>
  </div>
</div>

<script src="drawing.js"></script>
</body>
</html>
```

FILE: styles.css
```css
* {
  box-sizing: border-box;
}
body {
  margin: 0;
  background: #222933;
  color: #e6e8ea;
  font-family: "Open Sans", "Noto Sans", sans-serif;
  font-size: 14px;
}
button, input, select {
  font: inherit;
  color: inherit;
  background: none;
  border: none;
  margin: 0;
  padding: 0;
}
button {
  display: flex;
  align-items: center;
  justify-content: center;
  white-space: nowrap;
}
svg {
  display: block;
  flex: none;
}
.sprite {
  position: absolute;
  width: 0;
  height: 0;
}
.app {
  display: flex;
  flex-direction: column;
  height: 100vh;
  overflow: hidden;
}

/* small drop-down arrows */
.caret {
  flex: none;
  width: 0;
  height: 0;
  border: 3px solid transparent;
  border-top: 4px solid #d6d6d6;
  border-bottom: none;
}
.caret.wide {
  border-width: 5px;
  border-top-width: 5px;
  border-bottom: none;
}
.caret.tall {
  border-left-width: 4px;
  border-right-width: 4px;
  border-top-width: 6px;
}
.caret.dim { border-top-color: #777d86; }
.caret.grey { border-top-color: #555; }
.caret.dark { border-top: 5px solid #333; border-left-width: 4px; border-right-width: 4px; }

/* title bar */
.titlebar {
  display: flex;
  position: relative;
  height: 32px;
  flex: none;
}
.app-logo {
  position: absolute;
  left: 0;
  top: 0;
  z-index: 2;
  width: 50px;
  height: 50px;
  background: linear-gradient(#cfcfcf, #8f8f8f 45%, #777);
  border-right: 2px solid #111;
  border-bottom: 2px solid #111;
  gap: 2px;
}
.quick {
  display: flex;
  align-items: center;
  gap: 10px;
  height: 26px;
  padding-left: 60px;
}
.quick .caret { margin: 0 1px; }
.doc-title {
  display: flex;
  gap: 27px;
  position: absolute;
  left: 30%;
  margin-left: 3px;
  line-height: 30px;
  color: #eceeef;
}
.info {
  display: flex;
  align-items: center;
  gap: 11px;
  height: 26px;
  margin-left: auto;
}
.info input {
  width: 223px;
  height: 26px;
  margin-right: -5px;
  padding: 0 4px;
  background: #475064;
}
.info input::placeholder {
  color: #b9bec7;
  font-style: italic;
  opacity: 1;
}
.user { gap: 6px; }
.divider {
  width: 1px;
  height: 22px;
  background: #555d6b;
}
.win-buttons {
  display: flex;
  align-items: center;
  gap: 15px;
  height: 26px;
  padding: 0 5px 0 84px;
}

/* ribbon */
.ribbon-tabs {
  display: flex;
  gap: 1px;
  height: 22px;
  flex: none;
  padding-left: 56px;
  color: #a9aeb5;
}
.ribbon-tabs button {
  padding: 0 12px 2px;
}
.ribbon-tabs .active {
  background: #3b4453;
  color: #fff;
  border-radius: 2px 2px 0 0;
}
.ribbon-tabs .ribbon-min {
  gap: 7px;
  margin-left: 14px;
}
.ribbon {
  display: grid;
  grid-template-columns: 276fr 315fr 210fr 340fr 100fr 276fr 84fr 120fr 98fr 91fr;
  gap: 1px;
  height: 122px;
  flex: none;
  padding-left: 1px;
}
.panel {
  position: relative;
  display: flex;
  flex-direction: column;
  min-width: 0;
  background: #3b4453;
}
.tools {
  display: flex;
  height: 102px;
  padding-top: 4px;
}
.panel-title {
  display: flex;
  justify-content: center;
  align-items: center;
  gap: 7px;
  height: 20px;
  line-height: 20px;
}
.props-title { padding-right: 18px; }
.launcher {
  position: absolute;
  right: 5px;
  bottom: 6px;
}
.big {
  flex-direction: column;
  justify-content: flex-start;
  line-height: 20px;
  padding-top: 3px;
}
.big svg { margin-bottom: 5px; }
.big .caret { margin-top: 3px; }
.rows {
  display: flex;
  flex-direction: column;
}
.small {
  display: flex;
  align-items: center;
  justify-content: flex-start;
  gap: 7px;
  height: 31px;
}
.rows .small:last-child { height: 30px; }
.small .caret { margin-left: 3px; }
.small .caret.far { margin-left: 7px; }

.draw .big:nth-child(1), .draw .big:nth-child(2) { width: 52px; }
.draw .big:nth-child(3) { width: 72px; }
.draw .big:nth-child(4) { width: 46px; }
.draw .rows { padding-left: 5px; }
.modify { padding-left: 6px; }
.modify .rows:nth-child(1) { width: 91px; }
.modify .rows:nth-child(2) { width: 89px; }
.modify .rows:nth-child(3) { width: 95px; }
.annotation .big:nth-child(1) { width: 58px; }
.annotation .big:nth-child(2) { width: 74px; }
.annotation .rows { padding-left: 6px; }
.layers .big { width: 77px; }
.layer-rows {
  flex: 1;
  min-width: 0;
  padding-right: 3px;
}
.icon-row {
  display: flex;
  gap: 10px;
  padding-left: 4px;
}
.block .big { width: 52px; }
.block .rows { padding-left: 2px; }
.properties .big { width: 76px; }
.properties .rows { width: 25px; padding-left: 2px; }
.groups .big { width: 50px; }
.groups .rows .small { width: 29px; height: 30px; justify-content: center; }
.groups .small.on {
  height: 28px;
  margin-top: 2px;
  background: #47607c;
  border: 1px solid #6dc0ff;
}
.utilities .big { width: 87px; }
.utilities .rows { padding-left: 3px; }
.clipboard .big { width: 64px; }
.clipboard .rows { padding-left: 4px; }
.view .big { width: 78px; }
.view-title { justify-content: flex-start; padding-left: 5px; gap: 9px; }
.view-launcher { right: 17px; }

.combo {
  position: relative;
  display: flex;
  align-items: center;
  height: 28px;
  background: #4e5a6f;
  border: 1px solid #2a313d;
}
.combo select {
  appearance: none;
  width: 100%;
  height: 100%;
}
.combo .caret {
  position: absolute;
  right: 2px;
}
.swatch {
  display: block;
  width: 18px;
  height: 18px;
  background: #0ff;
  border: 1px solid #111;
}
.layer-state {
  position: absolute;
  left: 5px;
  display: flex;
  align-items: center;
  gap: 6px;
}
.layer-combo { margin-bottom: 3px; }
.layer-combo select { padding-left: 102px; }
.combos {
  display: flex;
  flex-direction: column;
  gap: 2px;
  flex: 1;
  min-width: 0;
  padding: 2px 3px 0 0;
}
.color-combo .swatch {
  position: absolute;
  left: 14px;
  width: 20px;
  height: 20px;
  border-color: #aaa;
}
.color-combo select { padding-left: 46px; }
.line-combo .line {
  position: absolute;
  left: 4px;
  width: 80px;
  height: 1px;
  background: #fff;
}
.line-combo select { padding-left: 86px; }

/* drawing file tabs */
.file-tabs {
  display: flex;
  height: 38px;
  flex: none;
  padding: 5px 0 0 20px;
  border-bottom: 5px solid #3b4453;
}
.tab {
  position: relative;
  z-index: 0;
  justify-content: flex-start;
  width: 160px;
  padding-left: 19px;
  color: #b3b7bd;
}
.tab::before {
  content: "";
  position: absolute;
  z-index: -1;
  inset: 0 1px;
  background: #2f3743;
  border-radius: 10px 10px 0 0;
  transform: perspective(40px) rotateX(5deg);
  transform-origin: bottom;
}
.tab.active {
  justify-content: space-between;
  width: 157px;
  padding: 0 19px 0 13px;
  color: #e6e8ea;
}
.tab.active::before { background: #3b4453; }
.tab.add {
  justify-content: center;
  width: 28px;
  height: 22px;
  margin: 5px 0 0 5px;
  padding: 0;
}

/* drawing area */
.canvas {
  position: relative;
  flex: 1;
  min-height: 0;
  overflow: hidden;
  background: #212830;
}
.model-space {
  position: absolute;
  inset: 0;
  width: 100%;
  height: 100%;
}
.ink { stroke: #ececea; }
.axis { stroke: #08e4e8; }
.view-label {
  position: absolute;
  left: 2px;
  top: 6px;
  line-height: 20px;
  color: #dcdee0;
}
.doc-buttons {
  position: absolute;
  right: 23px;
  top: 10px;
  display: flex;
  gap: 11px;
}
.viewcube {
  position: absolute;
  right: 36px;
  top: 53px;
  width: 128px;
  height: 128px;
  border: 13px solid #474b53;
  border-radius: 50%;
  font: bold 24px/24px "Liberation Sans", sans-serif;
  color: #b4b6b8;
}
.viewcube > span {
  position: absolute;
  width: 24px;
  text-align: center;
}
.viewcube .n { left: 39px; top: -20px; }
.viewcube .s { left: 39px; top: 100px; }
.viewcube .w { left: -21px; top: 40px; }
.viewcube .e { left: 99px; top: 40px; }
.face {
  position: absolute;
  left: 23px;
  top: 23px;
  width: 56px;
  height: 56px;
  background: #b4b6b8;
}
.face span {
  width: 34px;
  background: #a5a8b2;
  color: #4a4f55;
  font: bold 13px/34px "Open Sans", sans-serif;
}
.wcs {
  position: absolute;
  right: 72px;
  top: 210px;
  width: 57px;
  height: 21px;
  gap: 6px;
  border: 1px solid #8d909b;
  border-radius: 6px;
  background: #9ea1ad;
  color: #3f434c;
  font: 13px/18px "Liberation Sans", sans-serif;
}
.navbar {
  position: absolute;
  right: 14px;
  top: 261px;
  background: #565b5e;
  border-radius: 4px;
  box-shadow: 0 0 0 2px #1a1f26;
}
.scroll-edge {
  position: absolute;
  right: 2px;
  top: 0;
  bottom: 0;
  width: 9px;
  background: linear-gradient(#b9d3eb 0, #dbe7f4 90px, #b9d3eb 90px);
  border-right: 2px solid #1ec8e8;
}
.command-area {
  position: absolute;
  left: 385px;
  right: 385px;
  bottom: 0;
  font-family: "DejaVu Sans Mono", monospace;
  font-size: 15px;
}
.history span {
  display: inline-block;
  margin: 0 0 5px 77px;
  padding: 0 2px;
  line-height: 19px;
  background: #4b4f52;
  color: #b6b8ba;
  border-radius: 2px;
}
.command {
  display: flex;
  height: 32px;
}
.command-tools {
  display: flex;
  align-items: center;
  gap: 7px;
  width: 70px;
  padding-left: 5px;
  background: #272d3b;
}
.wrench { margin-left: 7px; }
.grip {
  width: 6px;
  height: 22px;
  background: radial-gradient(circle, #c8cacc 1px, transparent 1px) 0 0 / 3px 4px;
}
.command-box {
  display: flex;
  align-items: center;
  flex: 1;
  gap: 3px;
  padding: 0 5px;
  background: #bdbec0;
  border-radius: 2px;
}
.command-box input {
  flex: 1;
  margin-left: 4px;
}
.command-box input::placeholder {
  color: #55585c;
  font-style: italic;
  opacity: 1;
}

/* layout tabs and status bar */
.bottom {
  flex: none;
  height: 60px;
  border-top: 1px solid #494c55;
}
.layout-tabs {
  display: flex;
  gap: 2px;
  height: 23px;
  padding-left: 14px;
  color: #a9aeb5;
}
.layout-tabs button {
  padding: 0 13px;
  background: #2d3440;
  border-radius: 0 0 8px 8px;
}
.layout-tabs .active {
  padding: 0 14px;
  background: #3b4453;
  color: #fff;
  font-weight: bold;
}
.layout-tabs .add {
  margin-left: 4px;
  padding: 0 8px;
}
.status {
  display: flex;
  justify-content: flex-end;
  gap: 3px;
  height: 30px;
  margin-top: 4px;
  padding-right: 1px;
}
.cell {
  display: flex;
  align-items: center;
  gap: 1px;
  background: #3b4453;
}
.cell button {
  height: 30px;
  min-width: 29px;
}
.cell .caret { margin: 0 6px 0 7px; }
.cell .on { background: #5c8fc4; }
.cell .model-btn {
  padding: 0 5px;
}
.cell .scale .caret { margin: 0 5px; }
.wide-cell .caret { margin: 0 6px 0 5px; }
.joined { margin-left: -2px; }
.cell .scale { padding-left: 4px; }
.isolate button { min-width: 32px; }
.cell:nth-last-child(-n+2) button { min-width: 28px; }
.cell:nth-last-child(2) { gap: 7px; padding: 0 4px 0 2px; }
.cell:last-child { gap: 2px; }

/* windows taskbar */
.taskbar {
  display: flex;
  flex: none;
  height: 50px;
  background: linear-gradient(to right, #c6e3ec, #d3e8ef 40%, #d3e0ea 70%, #d9dcea);
  color: #111;
}
.start { width: 60px; }
.task-search {
  display: flex;
  align-items: center;
  gap: 14px;
  width: 430px;
  padding-left: 13px;
  background: #fff;
  border: 1px solid #c4c8cc;
}
.task-search input {
  flex: 1;
  font-size: 18px;
}
.task-search input::placeholder {
  color: #222;
  opacity: 1;
}
.task-apps {
  display: flex;
}
.task-apps button {
  width: 62px;
  border-bottom: 3px solid transparent;
  border-top: 3px solid transparent;
}
.task-apps .open {
  background: linear-gradient(#2e93cf, #2e93cf) bottom / 51px 3px no-repeat border-box;
}
.task-apps .current {
  background: linear-gradient(#2e93cf, #2e93cf) bottom / 100% 3px no-repeat border-box, #edf4f8;
}
.tray {
  display: flex;
  align-items: center;
  gap: 11px;
  margin-left: auto;
  padding-right: 5px;
}
.clock {
  flex-direction: column;
  width: 70px;
  line-height: 23px;
  margin-right: 11px;
}
.desktop-edge {
  width: 1px;
  height: 50px;
  margin-left: 13px;
  background: #a9b3c0;
}
```

FILE: drawing.js
```js
const NS = 'http://www.w3.org/2000/svg';

// three drawing units to a pixel
const UNIT = 3;
const ORIGIN = { x: 680, y: 250 };
const FAN_ORIGIN = { x: 1140, y: 310 };

// left, right, middle, height in pixels
const core = [
  [247,410,241,2],[94,299,252,3],[226,431,262,2],[163,368,268,2],[226,290,277,1],[139,302,283,2],
  [253,314,295,2],[232,294,302,1],[211,374,315,1],[232,476,321,3],[142,347,333,3],[258,320,341,1],
  [270,434,348,1],[235,297,354,1],[175,380,363,3],[232,437,373,2],[181,386,384,1],[118,362,396,3],
  [276,401,405,1],[211,455,412,2],[169,371,423,3],[193,356,432,1],[232,293,439,2],[223,344,447,1],
  [268,329,453,1],[190,353,459,1],[157,359,469,2],[217,422,478,2],[274,338,487,2],[139,344,497,3],
  [235,398,507,3],[181,344,516,1],[247,452,525,1],[244,491,534,3],[205,410,544,2],[241,302,555,1],
  [223,386,562,2],[274,335,567,1],[193,314,573,1],[238,443,580,2],[268,431,589,2],[181,383,594,1],
  [262,323,600,1],[154,317,606,1],[253,458,615,3],[241,302,624,1],[220,386,630,1],[160,365,637,2],
  [232,476,649,4],[187,389,661,2],[229,434,672,3],[268,329,679,2],[163,368,687,1],[235,440,696,3],
  [175,338,706,2],[259,383,720,1],[241,302,726,1],[112,317,733,2],[259,464,747,3],[118,320,759,1],
  [169,413,766,2],[238,299,777,1],[223,347,783,1],[274,335,787,1],[184,347,793,2],[133,299,801,1],
  [226,392,810,3],[160,365,828,3],[199,443,843,3],[136,341,850,2],[211,416,865,2],[100,344,879,3],
  [244,305,891,1],[226,389,900,3],[202,326,907,2],[253,314,912,1],[172,335,919,2],[196,320,927,1],
  [271,332,933,1],[259,464,943,2],[205,410,954,1],[160,365,963,3],[259,323,973,2],[223,347,981,1],
  [238,482,990,3],[196,401,1003,2],[214,338,1017,1],[265,329,1021,1],[259,422,1028,3],[193,356,1036,2],
  [244,446,1045,2],[271,332,1053,1],[100,347,1065,3],[154,356,1075,2],[214,338,1083,1],[265,428,1089,1],
  [247,308,1095,1],[226,347,1101,1],[166,368,1107,1],[181,305,1113,1],[244,305,1120,1],[274,335,1125,1],
  [199,323,1131,1],[172,419,1140,3],[154,317,1149,1],[241,302,1152,1],[124,329,1159,2],[241,365,1167,1],
  [217,419,1174,2],[136,341,1185,3]
];

const legend = [
  [78,144,77,1],[78,144,96,1],[183,308,73,2],[183,308,105,1],[349,512,72,3],[349,512,106,2],
  [349,515,134,1],[547,752,75,3],[550,755,109,2],[550,755,134,1],[778,1022,77,3],[781,1025,109,2],
  [784,1028,130,2]
];

// x1, y1, x2, y2 along the middle of the bar, then its thickness
const fan = [
  [394,194,418,157,0],[397,239,452,151,9],[425,236,523,85,7],[460,223,492,173,7],[468,225,490,190,4],
  [450,260,492,193,7],[461,283,546,147,9],[437,354,538,202,12],[501,317,558,235,8],[551,287,585,238,8],
  [567,314,612,250,8],[550,370,660,222,10],[600,345,661,268,6],[609,358,712,233,7],[641,366,678,319,10],
  [634,428,702,352,9],[677,424,797,290,10],[717,434,757,392,7],[690,483,813,375,10],[664,539,798,420,17],
  [703,548,838,429,8],[744,528,805,480,7],[749,560,827,495,6],[801,549,877,486,9],[736,618,871,530,14],
  [807,606,959,507,10],[847,610,900,578,6],[821,643,890,602,7],[852,649,938,594,9],[857,676,943,624,9],
  [873,698,1028,605,10],[908,708,957,677,7],[872,742,1008,658,7],[893,763,962,719,9],[852,820,1006,725,14],
  [911,820,1065,726,8],[966,802,1017,771,6],[935,857,1019,804,20],[953,878,1091,793,12],[971,886,1038,844,6],
  [1032,885,1083,854,9],[972,942,1127,846,9],[1011,945,1079,904,9],[1049,952,1134,898,14]
];

function addPath(id, d) {
  const path = document.createElementNS(NS, 'path');
  path.setAttribute('d', d);
  document.getElementById(id).appendChild(path);
}

function flatBars(id, bars) {
  addPath(id, bars.map(([left, right, mid, h]) => {
    const x = Math.floor(ORIGIN.x + left / UNIT) + 0.5;
    const y = Math.round(ORIGIN.y + mid / UNIT - (h + 1) / 2) + 0.5;
    const w = Math.round((right - left) / UNIT);
    return `M${x} ${y}h${w}v${h}h${-w}z`;
  }).join(''));
}

function slantedBars(id, bars) {
  addPath(id, bars.map(([x1, y1, x2, y2, t]) => {
    const len = Math.hypot(x2 - x1, y2 - y1);
    const nx = (y1 - y2) / len * t / 2;
    const ny = (x2 - x1) / len * t / 2;
    const corners = [[x1 + nx, y1 + ny], [x2 + nx, y2 + ny], [x2 - nx, y2 - ny], [x1 - nx, y1 - ny]];
    return 'M' + corners.map(([x, y]) =>
      `${(FAN_ORIGIN.x + x / UNIT).toFixed(1)} ${(FAN_ORIGIN.y + y / UNIT).toFixed(1)}`).join('L') + 'z';
  }).join(''));
}

flatBars('core', core);
flatBars('legend', legend);
slantedBars('fan', fan);
```
